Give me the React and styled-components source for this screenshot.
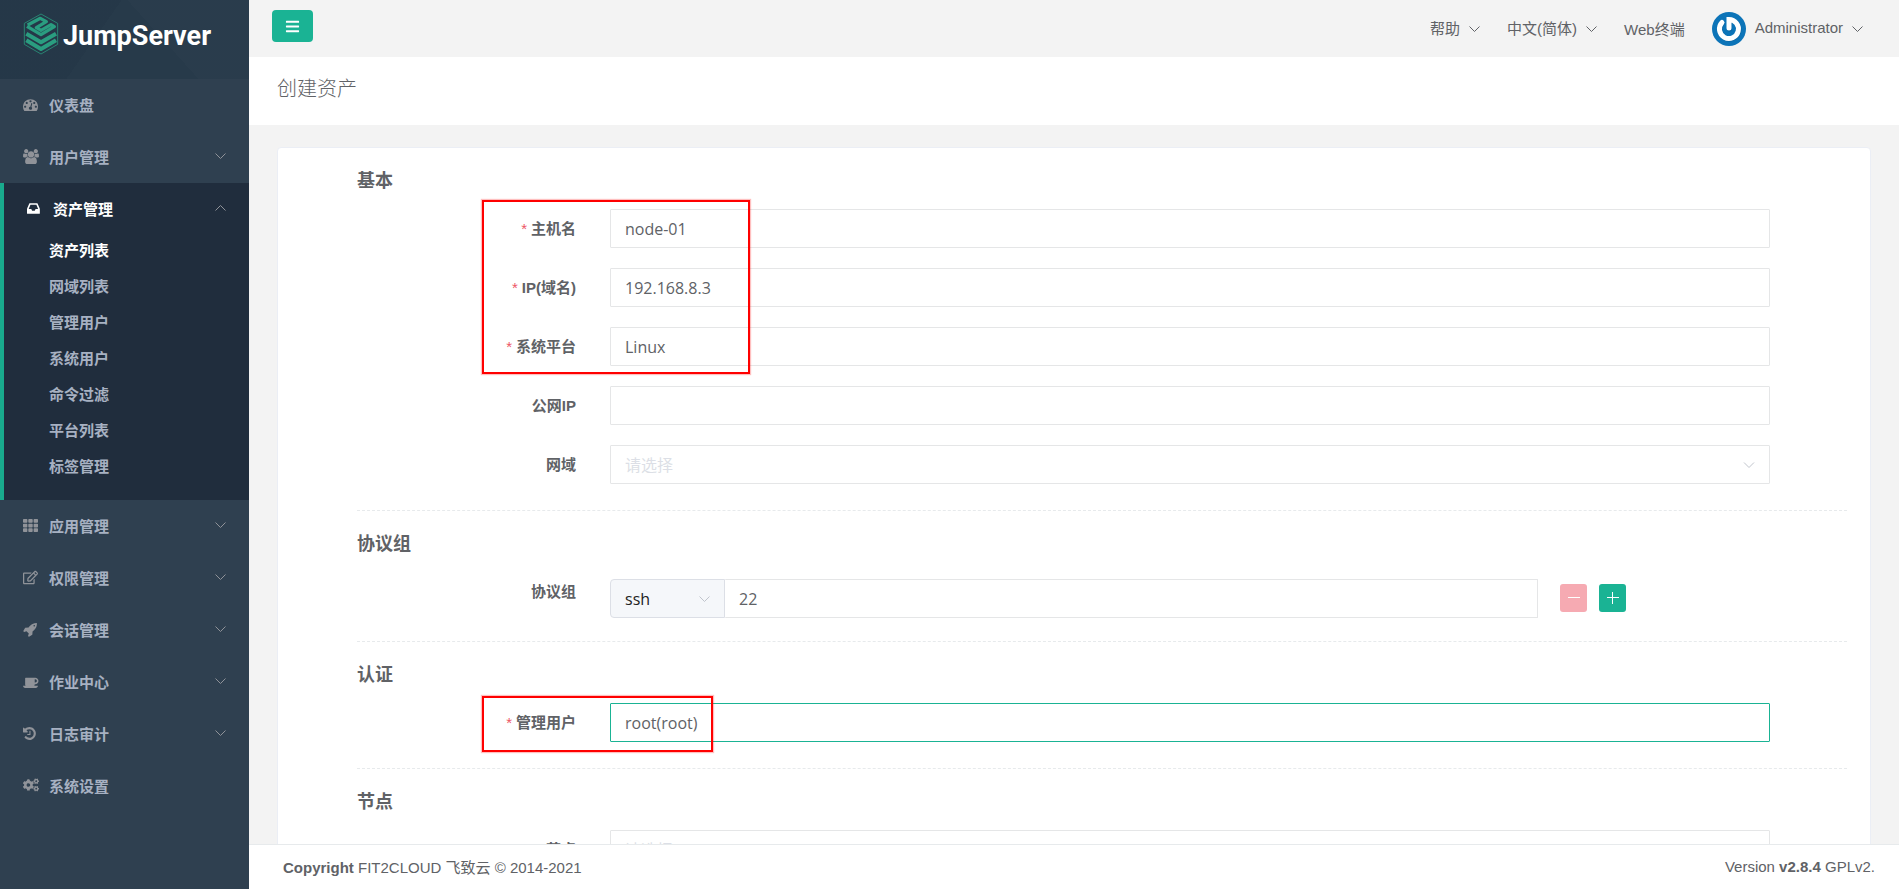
/* eslint-disable react/prop-types */
import { useState } from "react";
import styled, { createGlobalStyle } from "styled-components";
import { FaBars, FaCogs, FaRegEdit, FaTh } from "react-icons/fa";

const GlobalStyle = createGlobalStyle`
  * {
    box-sizing: border-box;
  }

  body {
    margin: 0;
    overflow: hidden;
    background: #f3f3f4;
    color: #606266;
    font-family: "Liberation Sans", "Noto Sans CJK SC", sans-serif;
    font-size: 15px;
  }

  button, input, select {
    font: inherit;
  }
`;

const Layout = styled.div`
  display: flex;
  height: 100vh;
`;

/* ---------- sidebar ---------- */

const Sidebar = styled.aside`
  flex: 0 0 249px;
  background: #2f4050;
`;

const Logo = styled.a`
  display: flex;
  align-items: flex-start;
  gap: 4px;
  height: 79px;
  padding: 13px 23px 0;
  color: #fff;
  text-decoration: none;
  background:
    linear-gradient(48deg, transparent 62%, rgba(255, 255, 255, 0.01) 62%),
    linear-gradient(125deg, rgba(20, 35, 55, 0.1) 40%, transparent 40%),
    #273a4a;
`;

const LogoText = styled.span`
  font-family: Roboto, sans-serif;
  font-size: 27px;
  font-weight: 700;
  line-height: 46px;
`;

const Menu = styled.ul`
  margin: 0;
  padding: 0;
  list-style: none;
`;

const MenuItem = styled.li`
  background: ${(p) => (p.$active ? "#202d3d" : "transparent")};
  border-left: ${(p) => (p.$active ? "4px solid #19aa8d" : "0")};
  padding-bottom: ${(p) => (p.$active ? "15px" : "0")};
`;

const MenuButton = styled.button`
  display: flex;
  align-items: center;
  gap: 10px;
  width: 100%;
  height: ${(p) => (p.$active ? "50px" : "52px")};
  padding: ${(p) => (p.$active ? "0 23px" : "0 23px 2px")};
  border: 0;
  background: none;
  color: ${(p) => (p.$active ? "#fff" : "#a7b1c2")};
  font-weight: 600;
  text-align: left;
  cursor: pointer;
`;

const MenuIcon = styled.span`
  display: flex;
  width: 16px;
  color: ${(p) => (p.$active ? "#fff" : "#909399")};
`;

const MenuArrow = styled.span`
  display: flex;
  color: #909399;
`;

const MenuLabel = styled.span`
  flex: 1;
`;

const SubLink = styled.a`
  display: block;
  padding-left: 45px;
  line-height: 36px;
  color: ${(p) => (p.$active ? "#fff" : "#a7b1c2")};
  font-weight: 600;
  text-decoration: none;
`;

/* ---------- header ---------- */

const Main = styled.main`
  display: flex;
  flex: 1;
  flex-direction: column;
  min-width: 0;
`;

const Topbar = styled.header`
  display: flex;
  flex: none;
  align-items: center;
  justify-content: space-between;
  height: 57px;
  padding: 0 36px 0 23px;
  background: #f3f3f3;
`;

const ToggleButton = styled.button`
  display: flex;
  align-items: center;
  justify-content: center;
  width: 41px;
  height: 32px;
  margin-bottom: 5px;
  border: 0;
  border-radius: 4px;
  background: #1ab394;
  color: #fff;
  cursor: pointer;
`;

const TopNav = styled.nav`
  display: flex;
  align-items: center;
  gap: 27px;
`;

const TopButton = styled.button`
  display: flex;
  align-items: center;
  gap: 9px;
  padding: 0;
  border: 0;
  background: none;
  color: #606266;
  cursor: pointer;
`;

const TopText = styled.span`
  padding-bottom: 2px;
`;

const TopLink = styled.a`
  padding-bottom: 1px;
  color: #606266;
  text-decoration: none;
`;

const TitleBar = styled.div`
  flex: none;
  height: 68px;
  padding-left: 28px;
  background: #fff;
`;

const Title = styled.h2`
  margin: 0;
  font-size: 20px;
  font-weight: 300;
  line-height: 65px;
`;

/* ---------- form ---------- */

const Content = styled.div`
  flex: 1;
  min-height: 0;
  overflow: hidden;
  padding: 22px 28px 0;
  background: #f3f3f3;
`;

const Card = styled.form`
  padding: 0 23px 40px 79px;
  border: 1px solid #ebeef5;
  border-radius: 4px;
  background: #fff;
`;

const Section = styled.section`
  position: relative;
  padding: 22px 0 ${(p) => (p.$tight ? "23px" : "26px")};

  & + & {
    border-top: 1px dashed #e7eaec;
  }
`;

const SectionTitle = styled.h3`
  margin: 0 0 17px;
  font-size: 18px;
  font-weight: 700;
  line-height: 22px;
`;

const Rows = styled.div`
  display: grid;
  gap: 20px;
`;

const FormRow = styled.div`
  display: grid;
  grid-template-columns: 253px 1fr 77px;
`;

const FieldLabel = styled.label`
  padding-right: 34px;
  font-weight: 700;
  line-height: 39px;
  text-align: right;

  &::before {
    content: ${(p) => (p.$required ? '"*"' : "none")};
    margin-right: 4px;
    color: #ed5565;
    font-weight: 400;
  }
`;

const Input = styled.input`
  width: 100%;
  min-width: 0;
  height: 39px;
  padding: 0 14px;
  border: 1px solid ${(p) => (p.$focused ? "#1ab394" : "#e5e6e7")};
  border-radius: 1px;
  outline: 0;
  background: #fff;
  color: #606266;
  font-family: "Open Sans", "Noto Sans CJK SC", sans-serif;
  font-size: 16px;

  &::placeholder {
    color: #dcdfe6;
  }
`;

const SelectWrap = styled.div`
  position: relative;
  color: #c0c4cc;

  svg {
    position: absolute;
    top: 17px;
    right: 15px;
    pointer-events: none;
  }
`;

const Select = styled(Input).attrs({ as: "select" })`
  appearance: none;
  color: #dcdfe6;
`;

const Protocol = styled.div`
  display: flex;
  align-items: center;
  padding-top: 7px;
`;

const ProtocolGroup = styled.div`
  display: grid;
  grid-template-columns: 115px 1fr;
  width: 80%;
  margin-right: 22px;
`;

const ProtocolSelect = styled(Select)`
  border-color: #dcdfe6;
  border-radius: 4px 0 0 4px;
  background: #f5f7fa;
  color: #222;
`;

const ProtocolPort = styled(Input)`
  border-left: 0;
`;

const SquareButton = styled.button`
  display: flex;
  align-items: center;
  justify-content: center;
  width: 27px;
  height: 28px;
  margin: 0 12px 1px 0;
  padding: 0;
  border: 0;
  border-radius: 3px;
  background: ${(p) => (p.$danger ? "#f6aab2" : "#1ab394")};
  color: #fff;
`;

const Highlight = styled.div`
  position: absolute;
  top: ${(p) => p.$top}px;
  left: 125px;
  width: ${(p) => p.$width}px;
  height: ${(p) => p.$height}px;
  border: 2px solid #ff0000;
  box-shadow: 0 0 1px 1px rgba(255, 0, 0, 0.25);
  pointer-events: none;
`;

const Footer = styled.footer`
  display: flex;
  flex: none;
  align-items: center;
  justify-content: space-between;
  height: 45px;
  padding: 0 24px 2px 34px;
  border-top: 1px solid #e7eaec;
  background: #fff;
`;

/* ---------- icons ---------- */

function Chevron({ up, width = 11 }) {
  return (
    <svg width={width} height="6" viewBox="0 0 11 6" fill="none" stroke="currentColor">
      <path d={up ? "M.5 5.5l5-5 5 5" : "M.5.5l5 5 5-5"} />
    </svg>
  );
}

function Glyph({ box = 1792, d }) {
  return (
    <svg height="15" viewBox={`0 0 ${box} 1792`} fill="currentColor">
      <path d={d} />
    </svg>
  );
}

const dashboard =
  "M384 1152q0-53-37.5-90.5t-90.5-37.5-90.5 37.5-37.5 90.5 37.5 90.5 90.5 37.5 90.5-37.5 37.5-90.5zm192-448q0-53-37.5-90.5t-90.5-37.5-90.5 37.5-37.5 90.5 37.5 90.5 90.5 37.5 90.5-37.5 37.5-90.5zm428 481l101-382q6-26-7.5-48.5t-38.5-29.5-48 6.5-30 39.5l-101 382q-60 5-107 43.5t-63 98.5q-20 77 20 146t117 89 146-20 89-117q16-60-6-117t-72-91zm660-33q0-53-37.5-90.5t-90.5-37.5-90.5 37.5-37.5 90.5 37.5 90.5 90.5 37.5 90.5-37.5 37.5-90.5zm-640-640q0-53-37.5-90.5t-90.5-37.5-90.5 37.5-37.5 90.5 37.5 90.5 90.5 37.5 90.5-37.5 37.5-90.5zm448 192q0-53-37.5-90.5t-90.5-37.5-90.5 37.5-37.5 90.5 37.5 90.5 90.5 37.5 90.5-37.5 37.5-90.5zm320 448q0 261-141 483-19 29-54 29h-1402q-35 0-54-29-141-221-141-483 0-182 71-348t191-286 286-191 348-71 348 71 286 191 191 286 71 348z";
const users =
  "M593 896q-162 5-265 128h-134q-82 0-138-40.5t-56-118.5q0-353 124-353 6 0 43.5 21t97.5 42.5 119 21.5q67 0 133-23-5 37-5 66 0 139 81 256zm1071 637q0 120-73 189.5t-194 69.5h-874q-121 0-194-69.5t-73-189.5q0-53 3.5-103.5t14-109 26.5-108.5 43-97.5 62-81 85.5-53.5 111.5-20q10 0 43 21.5t73 48 107 48 135 21.5 135-21.5 107-48 73-48 43-21.5q61 0 111.5 20t85.5 53.5 62 81 43 97.5 26.5 108.5 14 109 3.5 103.5zm-1024-1277q0 106-75 181t-181 75-181-75-75-181 75-181 181-75 181 75 75 181zm704 384q0 159-112.5 271.5t-271.5 112.5-271.5-112.5-112.5-271.5 112.5-271.5 271.5-112.5 271.5 112.5 112.5 271.5zm576 225q0 78-56 118.5t-138 40.5h-134q-103-123-265-128 81-117 81-256 0-29-5-66 66 23 133 23 59 0 119-21.5t97.5-42.5 43.5-21q124 0 124 353zm-128-609q0 106-75 181t-181 75-181-75-75-181 75-181 181-75 181 75 75 181z";
const inbox =
  "M1023 960h316q-1-3-2.5-8.5t-2.5-7.5l-212-496h-708l-212 496q-1 3-2.5 8.5t-2.5 7.5h316l95 192h320zm513 30v482q0 26-19 45t-45 19h-1408q-26 0-45-19t-19-45v-482q0-62 25-123l238-552q10-25 36.5-42t52.5-17h832q26 0 52.5 17t36.5 42l238 552q25 61 25 123z";
const rocket =
  "M1440 448q0-40-28-68t-68-28-68 28-28 68 28 68 68 28 68-28 28-68zm224-288q0 249-75.5 430.5t-253.5 360.5q-81 80-195 176l-20 379q-2 16-16 26l-384 224q-7 4-16 4-12 0-23-9l-64-64q-13-14-8-32l85-276-281-281-276 85q-3 1-9 1-14 0-23-9l-64-64q-17-19-5-39l224-384q10-14 26-16l379-20q96-114 176-195 188-187 358-258t431-71q14 0 24 9.5t10 22.5z";
const coffee =
  "M1664 832q0-80-56-136t-136-56h-64v384h64q80 0 136-56t56-136zm-1664 576h1792q0 106-75 181t-181 75h-1280q-106 0-181-75t-75-181zm1856-576q0 159-112.5 271.5t-271.5 112.5h-64v32q0 92-66 158t-158 66h-704q-92 0-158-66t-66-158v-736q0-26 19-45t45-19h1152q159 0 271.5 112.5t112.5 271.5z";
const history =
  "M1536 896q0 156-61 298t-164 245-245 164-298 61q-172 0-327-72.5t-264-204.5q-7-10-6.5-22.5t8.5-20.5l137-138q10-9 25-9 16 2 23 12 73 95 179 147t225 52q104 0 198.5-40.5t163.5-109.5 109.5-163.5 40.5-198.5-40.5-198.5-109.5-163.5-163.5-109.5-198.5-40.5q-98 0-188 35.5t-160 101.5l137 138q31 30 14 69-17 40-59 40h-448q-26 0-45-19t-19-45v-448q0-42 40-59 39-17 69 14l130 129q107-101 244.5-156.5t284.5-55.5q156 0 298 61t245 164 164 245 61 298zm-640-288v448q0 14-9 23t-23 9h-320q-14 0-23-9t-9-23v-64q0-14 9-23t23-9h224v-352q0-14 9-23t23-9h64q14 0 23 9t9 23z";

function LogoMark() {
  return (
    <svg width="36" height="42" viewBox="8 9 108 126" fill="none" stroke="#2a9d80">
      <path strokeWidth="3" opacity="0.75" d="M62 12l50 28v63l-50 29-50-29V40z" />
      <g strokeWidth="10" strokeLinejoin="round">
        <path d="M22 45L60 25l18 10-30 18 14 8 30-17 10 6-40 24-42-25" />
        <path strokeWidth="12" d="M18 71l44 26 45-26M18 91l44 26 45-26" />
      </g>
    </svg>
  );
}

function Avatar() {
  return (
    <svg width="34" height="34" viewBox="0 0 34 34">
      <circle cx="17" cy="17" r="17" fill="#0c74b8" />
      <g fill="none" strokeLinecap="round">
        <path stroke="#0a4f80" strokeWidth="5" opacity="0.4" d="M17.5 17V8a9.5 9.5 0 1 1-7 3" />
        <path stroke="#fff" strokeWidth="5" d="M17 16V7.5a9.5 9.5 0 1 1-7 3" />
      </g>
    </svg>
  );
}

/* ---------- data ---------- */

const subMenu = ["资产列表", "网域列表", "管理用户", "系统用户", "命令过滤", "平台列表", "标签管理"];

const menu = [
  { label: "仪表盘", icon: <Glyph d={dashboard} />, leaf: true },
  { label: "用户管理", icon: <Glyph box={1920} d={users} /> },
  { label: "资产管理", icon: <Glyph box={1536} d={inbox} />, children: subMenu },
  { label: "应用管理", icon: <FaTh size={15} /> },
  { label: "权限管理", icon: <FaRegEdit size={15} /> },
  { label: "会话管理", icon: <Glyph d={rocket} /> },
  { label: "作业中心", icon: <Glyph box={1920} d={coffee} /> },
  { label: "日志审计", icon: <Glyph box={1536} d={history} /> },
  { label: "系统设置", icon: <FaCogs size={16} />, leaf: true },
];

function NavItem({ item }) {
  const active = Boolean(item.children);

  return (
    <MenuItem $active={active}>
      <MenuButton type="button" $active={active}>
        <MenuIcon $active={active}>{item.icon}</MenuIcon>
        <MenuLabel>{item.label}</MenuLabel>
        {!item.leaf && (
          <MenuArrow>
            <Chevron up={active} />
          </MenuArrow>
        )}
      </MenuButton>
      {active && (
        <Menu>
          {item.children.map((name, i) => (
            <li key={name}>
              <SubLink href="#" $active={i === 0}>
                {name}
              </SubLink>
            </li>
          ))}
        </Menu>
      )}
    </MenuItem>
  );
}

function Field({ id, label, required, children }) {
  return (
    <FormRow>
      <FieldLabel htmlFor={id} $required={required}>
        {label}
      </FieldLabel>
      {children}
    </FormRow>
  );
}

export default function App() {
  const [form, setForm] = useState({
    hostname: "node-01",
    ip: "192.168.8.3",
    platform: "Linux",
    publicIp: "",
    port: "22",
    adminUser: "root(root)",
    nodes: "",
  });

  const bind = (id) => ({
    id,
    value: form[id],
    onChange: (e) => setForm({ ...form, [id]: e.target.value }),
  });

  return (
    <>
      <GlobalStyle />
      <Layout>
        <Sidebar>
          <Logo href="#">
            <LogoMark />
            <LogoText>JumpServer</LogoText>
          </Logo>
          <Menu>
            {menu.map((item) => (
              <NavItem key={item.label} item={item} />
            ))}
          </Menu>
        </Sidebar>

        <Main>
          <Topbar>
            <ToggleButton type="button" aria-label="menu">
              <FaBars size={15} />
            </ToggleButton>
            <TopNav>
              <TopButton type="button">
                <TopText>帮助</TopText>
                <Chevron />
              </TopButton>
              <TopButton type="button">
                <TopText>中文(简体)</TopText>
                <Chevron />
              </TopButton>
              <TopLink href="#">Web终端</TopLink>
              <TopButton type="button">
                <Avatar />
                <TopText>Administrator</TopText>
                <Chevron />
              </TopButton>
            </TopNav>
          </Topbar>

          <TitleBar>
            <Title>创建资产</Title>
          </TitleBar>

          <Content>
            <Card>
              <Section>
                <SectionTitle>基本</SectionTitle>
                <Rows>
                  <Field id="hostname" label="主机名" required>
                    <Input {...bind("hostname")} />
                  </Field>
                  <Field id="ip" label="IP(域名)" required>
                    <Input {...bind("ip")} />
                  </Field>
                  <Field id="platform" label="系统平台" required>
                    <Input {...bind("platform")} />
                  </Field>
                  <Field id="publicIp" label="公网IP">
                    <Input {...bind("publicIp")} />
                  </Field>
                  <Field id="domain" label="网域">
                    <SelectWrap>
                      <Select id="domain">
                        <option>请选择</option>
                      </Select>
                      <Chevron width={12} />
                    </SelectWrap>
                  </Field>
                </Rows>
                <Highlight $top={52} $width={268} $height={174} />
              </Section>

              <Section $tight>
                <SectionTitle>协议组</SectionTitle>
                <Field id="protocol" label="协议组">
                  <Protocol>
                    <ProtocolGroup>
                      <SelectWrap>
                        <ProtocolSelect id="protocol">
                          <option>ssh</option>
                        </ProtocolSelect>
                        <Chevron />
                      </SelectWrap>
                      <ProtocolPort {...bind("port")} aria-label="port" />
                    </ProtocolGroup>
                    <SquareButton type="button" $danger disabled aria-label="remove">
                      <svg width="12" height="12" stroke="currentColor">
                        <path d="M0 5.5h12" />
                      </svg>
                    </SquareButton>
                    <SquareButton type="button" aria-label="add">
                      <svg width="12" height="12" stroke="currentColor">
                        <path d="M0 5.5h12M5.5 0v12" />
                      </svg>
                    </SquareButton>
                  </Protocol>
                </Field>
              </Section>

              <Section>
                <SectionTitle>认证</SectionTitle>
                <Field id="adminUser" label="管理用户" required>
                  <Input {...bind("adminUser")} $focused />
                </Field>
                <Highlight $top={54} $width={231} $height={56} />
              </Section>

              <Section>
                <SectionTitle>节点</SectionTitle>
                <Field id="nodes" label="节点">
                  <Input {...bind("nodes")} placeholder="请选择" />
                </Field>
              </Section>
            </Card>
          </Content>

          <Footer>
            <span>
              <strong>Copyright</strong> FIT2CLOUD 飞致云 © 2014-2021
            </span>
            <span>
              Version <strong>v2.8.4</strong> GPLv2.
            </span>
          </Footer>
        </Main>
      </Layout>
    </>
  );
}
